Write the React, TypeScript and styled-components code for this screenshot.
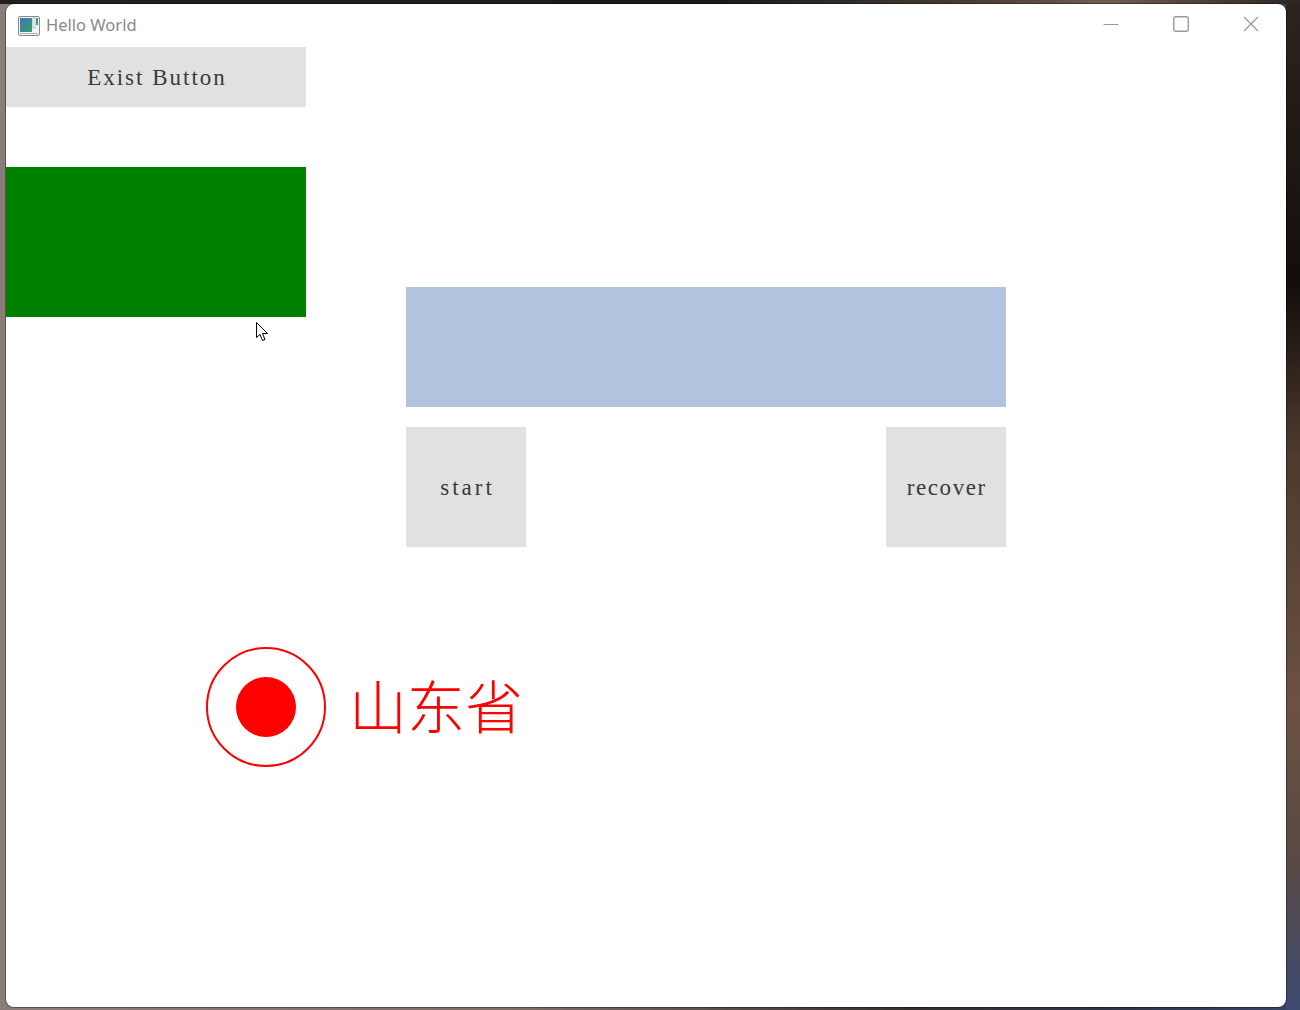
import React, { FC } from 'react';
import styled, { createGlobalStyle } from 'styled-components';

const Global = createGlobalStyle`
    html, body {
        margin: 0;
        padding: 0;
    }
    body {
        width: 1300px;
        height: 1010px;
        overflow: hidden;
        font-family: 'Noto Sans', 'Liberation Sans', sans-serif;
    }
`;

const Desktop = styled.div`
    box-sizing: border-box;
    width: 1300px;
    height: 1010px;
    padding: 4px 14px 3px 6px;
    display: flex;
    background:
        linear-gradient(90deg, #232120 0%, #1a1918 55%, #4a3d36 75%, #6e5c52 85%, #2e2622 100%) top / 100% 4px no-repeat,
        linear-gradient(180deg, #2c2420 0%, #120e0c 28%, #4e3a2e 45%, #6b5242 70%, #5a4a44 85%, #3c4a70 100%) right / 14px 100% no-repeat,
        linear-gradient(90deg, #8a7c78 0%, #7e6e68 40%, #34302e 70%, #2e3446 85%, #3a4668 100%);
`;

const Window = styled.div`
    position: relative;
    width: 1280px;
    height: 1003px;
    background: #ffffff;
    border-radius: 8px;
    box-shadow: 0 0 0 1px rgba(0, 0, 0, 0.35);
    display: flex;
    flex-direction: column;
    overflow: hidden;
`;

const TitleBar = styled.div`
    height: 43px;
    flex: none;
    display: flex;
    flex-direction: row;
    align-items: center;
    padding-left: 12px;
`;

const Title = styled.span`
    margin-left: 6px;
    font-family: 'Noto Sans', 'Liberation Sans', sans-serif;
    font-size: 16.5px;
    color: #8a8a8a;
    flex: 1;
    padding-bottom: 2px;
`;

const Controls = styled.div`
    display: flex;
    flex-direction: row;
    height: 100%;
`;

const ControlButton = styled.div`
    width: 70px;
    height: 100%;
    display: flex;
    align-items: center;
    justify-content: center;
    padding-bottom: 4px;
    box-sizing: border-box;

    svg {
        stroke: #9a9a9a;
        fill: none;
    }
`;

const Canvas = styled.div`
    position: relative;
    flex: 1;
    display: flex;
    flex-direction: column;
`;

const TopRow = styled.div`
    display: flex;
    flex-direction: row;
    align-items: flex-start;
`;

const LeftColumn = styled.div`
    display: flex;
    flex-direction: column;
    gap: 60px;
`;

const GreyButton = styled.div<{ $w: number; $h: number; $spacing: number }>`
    width: ${(p) => p.$w}px;
    height: ${(p) => p.$h}px;
    background: #e1e1e1;
    display: flex;
    align-items: center;
    justify-content: center;
    font-family: 'Liberation Serif', 'DejaVu Serif', serif;
    font-size: 23px;
    letter-spacing: ${(p) => p.$spacing}px;
    text-indent: ${(p) => p.$spacing}px;
    color: #3a3a3a;
    padding-top: 2px;
    box-sizing: border-box;
    user-select: none;
`;

const GreenBlock = styled.div`
    width: 300px;
    height: 150px;
    background: #008000;
`;

const RightColumn = styled.div`
    margin: 240px 0 0 100px;
    width: 600px;
    display: flex;
    flex-direction: column;
    gap: 20px;
`;

const BlueBar = styled.div`
    height: 120px;
    background: #b0c4de;
`;

const ButtonRow = styled.div`
    display: flex;
    flex-direction: row;
    justify-content: space-between;
`;

const RadioRow = styled.div`
    margin: 100px 0 0 200px;
    display: flex;
    flex-direction: row;
    align-items: center;
    gap: 23px;
`;

const Ring = styled.div`
    box-sizing: border-box;
    width: 120px;
    height: 120px;
    border: 2px solid #ff0000;
    border-radius: 50%;
    display: flex;
    align-items: center;
    justify-content: center;
`;

const Dot = styled.div`
    width: 60px;
    height: 60px;
    border-radius: 50%;
    background: #ff0000;
`;

const Province = styled.span`
    font-family: 'Noto Sans CJK SC', 'Noto Sans', sans-serif;
    font-weight: 300;
    font-size: 58px;
    line-height: 1;
    color: #ff0000;
    padding-bottom: 6px;
`;

const Pointer = styled.svg`
    position: absolute;
    left: 250px;
    top: 275px;
`;

const AppIcon: FC = () => (
    <svg width="22" height="20" viewBox="0 0 22 20">
        <defs>
            <linearGradient id="ig" x1="0" y1="0" x2="1" y2="1">
                <stop offset="0" stopColor="#3a78c8" />
                <stop offset="1" stopColor="#3aa060" />
            </linearGradient>
        </defs>
        <rect x="0.5" y="0.5" width="21" height="19" rx="1.5" fill="#f4f4f4" stroke="#8a8a8a" />
        <rect x="2" y="2" width="12" height="14" fill="url(#ig)" />
        <rect x="15" y="2" width="2" height="10" fill="#ffffff" stroke="#9a9a9a" strokeWidth="0.6" />
        <rect x="18" y="2" width="2" height="7" fill="#2aa0a0" />
        <rect x="2" y="17" width="18" height="1" fill="#b0b0b0" />
    </svg>
);

const App: FC = () => {
    return (
        <>
            <Global />
            <Desktop>
                <Window>
                    <TitleBar>
                        <AppIcon />
                        <Title>Hello World</Title>
                        <Controls>
                            <ControlButton>
                                <svg width="16" height="16" viewBox="0 0 16 16">
                                    <path d="M0.5 8.5 H15.5" strokeWidth="1" />
                                </svg>
                            </ControlButton>
                            <ControlButton>
                                <svg width="16" height="16" viewBox="0 0 16 16">
                                    <rect x="0.75" y="0.75" width="14.5" height="14.5" rx="2" strokeWidth="1.4" />
                                </svg>
                            </ControlButton>
                            <ControlButton>
                                <svg width="16" height="16" viewBox="0 0 16 16">
                                    <path d="M1 1 L15 15 M15 1 L1 15" strokeWidth="1.3" />
                                </svg>
                            </ControlButton>
                        </Controls>
                    </TitleBar>
                    <Canvas>
                        <TopRow>
                            <LeftColumn>
                                <GreyButton $w={300} $h={60} $spacing={2}>
                                    Exist Button
                                </GreyButton>
                                <GreenBlock />
                            </LeftColumn>
                            <RightColumn>
                                <BlueBar />
                                <ButtonRow>
                                    <GreyButton $w={120} $h={120} $spacing={3}>
                                        start
                                    </GreyButton>
                                    <GreyButton $w={120} $h={120} $spacing={1.6}>
                                        recover
                                    </GreyButton>
                                </ButtonRow>
                            </RightColumn>
                        </TopRow>
                        <RadioRow>
                            <Ring>
                                <Dot />
                            </Ring>
                            <Province>山东省</Province>
                        </RadioRow>
                        <Pointer width="14" height="20" viewBox="0 0 14 20">
                            <path d="M0.5 0.5 L0.5 15.5 L4 12.5 L6.5 18.5 L9 17.5 L6.5 11.5 L11.5 11.5 Z" fill="#ffffff" stroke="#000000" strokeWidth="1" strokeLinejoin="round" />
                        </Pointer>
                    </Canvas>
                </Window>
            </Desktop>
        </>
    );
};

export default App;
